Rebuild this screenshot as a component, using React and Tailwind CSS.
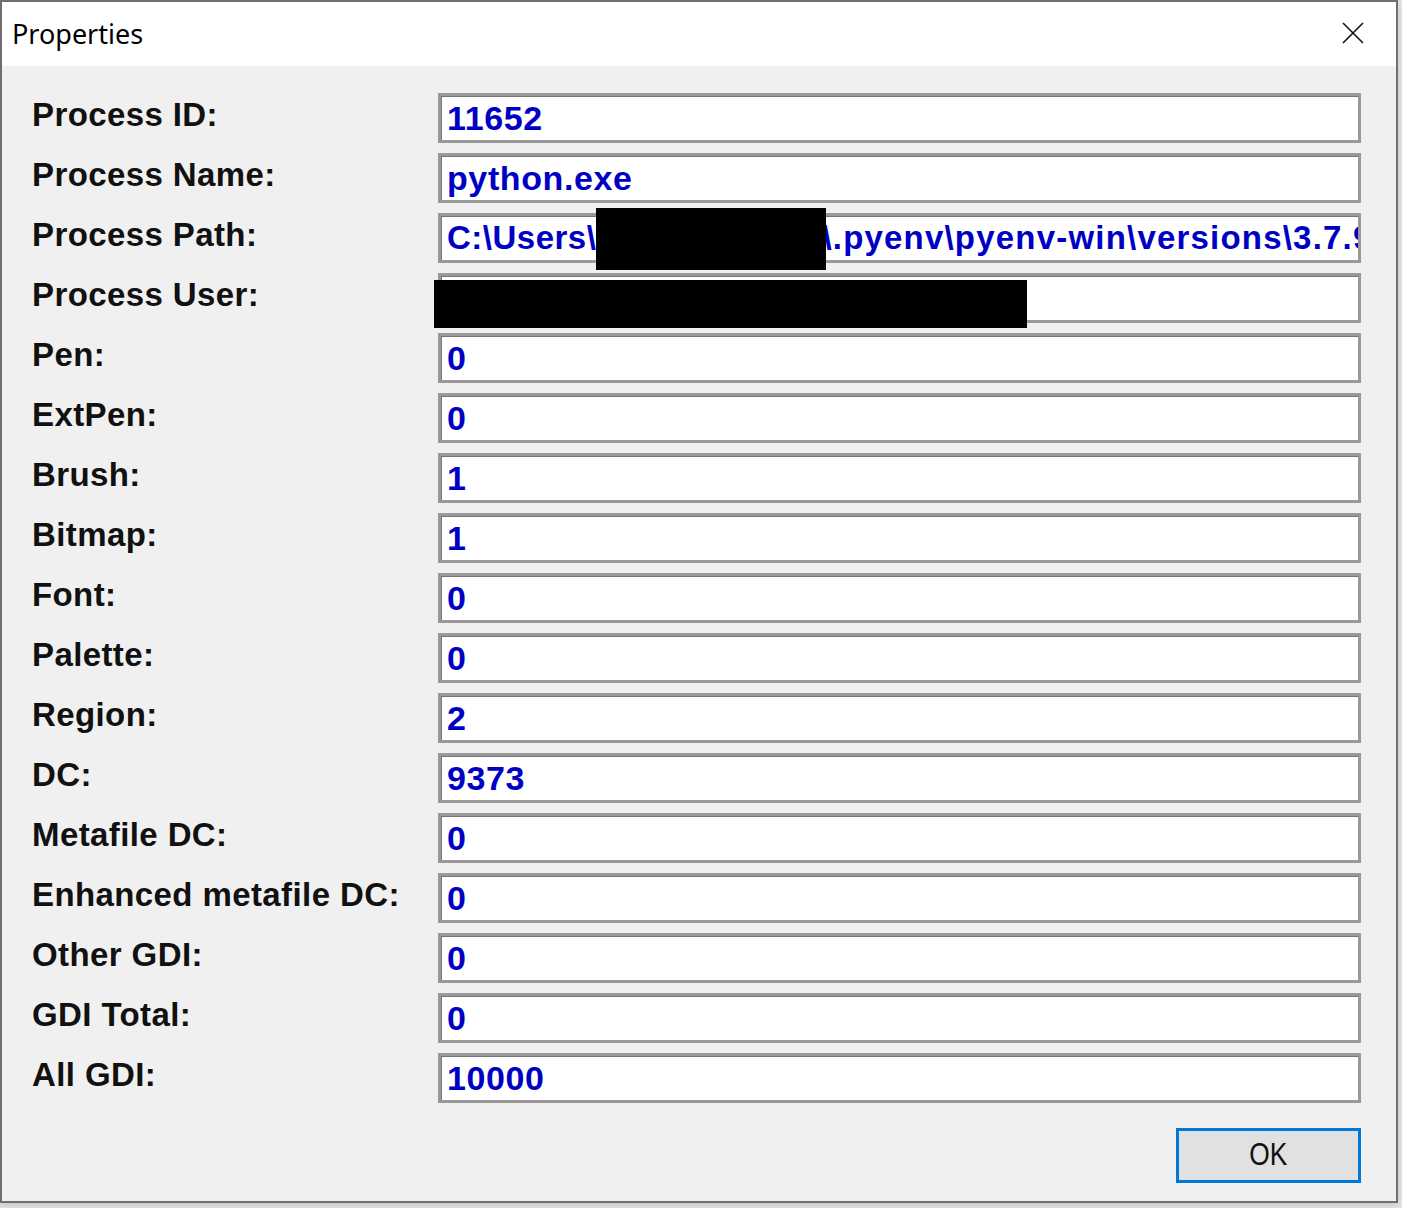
import React from "react";

const rows = [
  ["Process ID:", "11652"],
  ["Process Name:", "python.exe"],
  ["Process Path:", "__PATH__"],
  ["Process User:", ""],
  ["Pen:", "0"],
  ["ExtPen:", "0"],
  ["Brush:", "1"],
  ["Bitmap:", "1"],
  ["Font:", "0"],
  ["Palette:", "0"],
  ["Region:", "2"],
  ["DC:", "9373"],
  ["Metafile DC:", "0"],
  ["Enhanced metafile DC:", "0"],
  ["Other GDI:", "0"],
  ["GDI Total:", "0"],
  ["All GDI:", "10000"],
];

export default function App() {
  return (
    <div className="min-h-screen w-full bg-[#e4e4e4]">
      <div className="relative flex h-[1203px] w-[1398px] flex-col border-2 border-[#6f6f6f] bg-[#f0f0f0] shadow-[0_2px_6px_rgba(0,0,0,0.15)]">
        <div className="flex h-[64px] items-center justify-between bg-white pl-[10px] pr-[32px]">
          <span className="text-[27px] text-black" style={{ fontFamily: '"Noto Sans", "Open Sans", sans-serif' }}>
            Properties
          </span>
          <svg width="22" height="22" viewBox="0 0 22 22" className="mb-[2px]">
            <path d="M1 1 L21 21 M21 1 L1 21" stroke="#111" strokeWidth="1.6" fill="none" />
          </svg>
        </div>
        <div
          className="flex flex-1 flex-col gap-[10px] pl-[30px] pr-[35px] pt-[27px]"
          style={{ fontFamily: '"Liberation Sans", Arial, sans-serif' }}
        >
          {rows.map(([label, value]) => (
            <div key={label} className="flex h-[50px]">
              <div className="w-[406px] text-[33px] font-bold leading-[43px] tracking-[0.4px] text-[#111]">{label}</div>
              <div className="flex flex-1 items-center overflow-hidden whitespace-nowrap border-[3px] border-[#999] bg-white pl-[6px] shadow-[inset_1px_1px_0_#777] text-[34px] font-bold text-[#0000c4]">
                {value === "__PATH__" ? (
                  <span className="text-[33px] tracking-[0.5px]">
                    C:\Users\<span className="inline-block w-[226px]"></span>
                    <span className="tracking-[1.2px]">\.pyenv\pyenv-win\versions\3.7.9\python.exe</span>
                  </span>
                ) : (
                  <span className="tracking-[0.6px]">{value}</span>
                )}
              </div>
            </div>
          ))}
          <div className="mt-[15px] flex justify-end">
            <button className="flex h-[55px] w-[185px] items-center justify-center border-[3px] border-[#0078d7] bg-[#e1e1e1] text-[31px] text-[#111]">
              <span className="inline-block scale-x-85">OK</span>
            </button>
          </div>
        </div>
        <div className="absolute left-[594px] top-[206px] h-[62px] w-[230px] bg-black"></div>
        <div className="absolute left-[432px] top-[278px] h-[48px] w-[593px] bg-black"></div>
      </div>
    </div>
  );
}
